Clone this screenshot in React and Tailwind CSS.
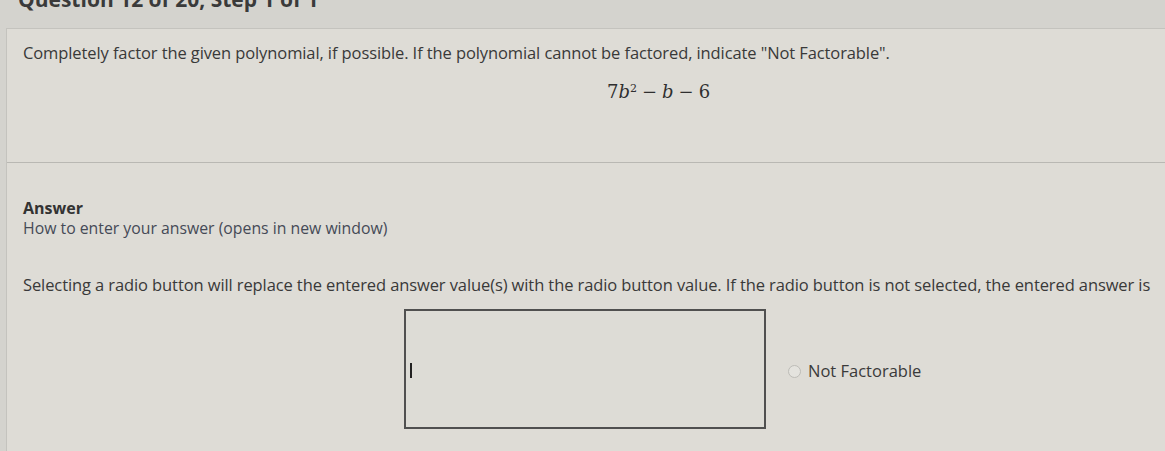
import React from "react";

const font = { fontFamily: '"Open Sans", "Liberation Sans", sans-serif' };

function MathExpr() {
  return (
    <div
      className="text-center text-[18px] text-[#2f2f2f] pl-[145px]"
      style={{ fontFamily: '"DejaVu Serif", "Liberation Serif", serif' }}
    >
      <span>7</span>
      <span className="italic">b</span>
      <sup className="text-[11px]">2</sup>
      <span className="mx-[5px]">−</span>
      <span className="italic">b</span>
      <span className="mx-[5px]">−</span>
      <span>6</span>
    </div>
  );
}

export default function App() {
  return (
    <div
      className="w-[1165px] h-[451px] overflow-hidden bg-[#d4d3ce] text-[#393939]"
      style={font}
    >
      {/* header, mostly scrolled off */}
      <div className="h-[26px] overflow-hidden">
        <div className="-mt-[16px] pl-[18px] text-[21px] font-bold text-[#3a3a3a]">
          Question 12 of 20, Step 1 of 1
        </div>
      </div>

      <div className="ml-[6px] mt-[2px] bg-[#dedcd6] border-l border-t border-[#c4c3be] h-full">
        {/* question */}
        <div className="h-[134px] border-b border-[#b9b8b3] pt-[12px]">
          <p className="pl-[16px] text-[16.5px] font-medium tracking-[-0.1px] whitespace-nowrap">
            Completely factor the given polynomial, if possible. If the polynomial cannot be factored, indicate "Not Factorable".
          </p>
          <div className="mt-[12px]">
            <MathExpr />
          </div>
        </div>

        {/* answer */}
        <div className="pl-[16px] pt-[36px]">
          <div className="text-[16px] font-bold leading-[19px] text-[#333]">Answer</div>
          <div className="text-[15.8px] font-medium leading-[20px] text-[#454a56]">
            How to enter your answer (opens in new window)
          </div>
          <p className="mt-[35px] text-[16.5px] font-medium tracking-[-0.1px] whitespace-nowrap overflow-hidden">
            Selecting a radio button will replace the entered answer value(s) with the radio button value. If the radio button is not selected, the entered answer is
          </p>

          <div className="flex items-center mt-[11px] ml-[381px]">
            <div className="w-[362px] h-[120px] border-2 border-[#505050] bg-[#dddcd6] flex items-center pl-[4px]">
              <div className="w-[2px] h-[15px] bg-[#222] mt-[4px]" />
            </div>
            <label className="flex items-center ml-[22px] mt-[5px] gap-[7px] text-[16.5px] font-medium text-[#3a3a3a]">
              <span className="w-[13px] h-[13px] rounded-full border border-[#bdbcb7] bg-[#e4e3de]" />
              Not Factorable
            </label>
          </div>
        </div>
      </div>
    </div>
  );
}
